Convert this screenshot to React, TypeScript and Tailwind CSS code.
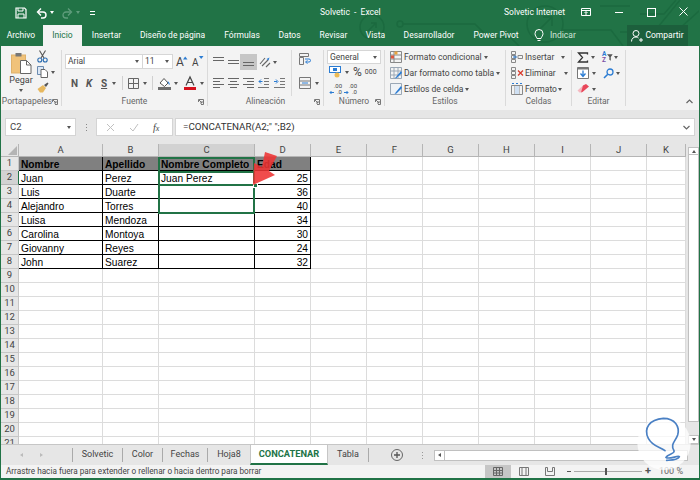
import React from 'react';

const UI = 'Roboto, "Noto Sans", sans-serif';

const Caret = ({ className = '' }: { className?: string }) => (
  <span className={`inline-block h-0 w-0 border-x-[2.5px] border-t-[3px] border-x-transparent border-t-[#555] ${className}`} />
);

const Svg = ({ w = 14, h = 14, children, className = '' }: { w?: number; h?: number; children: React.ReactNode; className?: string }) => (
  <svg width={w} height={h} viewBox={`0 0 ${w} ${h}`} fill="none" className={`shrink-0 overflow-visible ${className}`}>{children}</svg>
);

const Icons = {
  Save: () => <Svg w={12} h={12}><path d="M1 1h8.5L11 2.5V11H1z" stroke="#fff" strokeWidth="1.2" /><path d="M3 1v3h5V1M3 11V7h6v4" stroke="#fff" /></Svg>,
  Undo: () => <Svg w={11} h={11}><path d="M2 5h5a3 3 0 0 1 0 6H5" stroke="#fff" strokeWidth="1.4" /><path d="M5 1.5 1.5 5 5 8.5" stroke="#fff" strokeWidth="1.4" /></Svg>,
  Redo: () => <Svg w={11} h={11}><path d="M9 5H4a3 3 0 0 0 0 6h2" stroke="#5f9d7c" strokeWidth="1.3" /><path d="M6 1.5 9.5 5 6 8.5" stroke="#5f9d7c" strokeWidth="1.3" /></Svg>,
  Paste: () => (
    <Svg w={21} h={21}>
      <rect x="0.5" y="2" width="14" height="18" fill="#f0c27a" stroke="#dfb16a" />
      <rect x="4.500" y="0" width="6" height="3.500" fill="#777" />
      <path d="M9.500 7.500h6l4.500 4.500v8.500H9.500z" fill="#fff" stroke="#666" />
      <path d="M15.500 7.500V12H20" stroke="#666" />
    </Svg>
  ),
  Scissors: () => (
    <Svg w={11} h={13}>
      <path d="M2.5 0.5 7 8M8.5 0.5 4 8" stroke="#555" strokeWidth="1.1" />
      <circle cx="2.8" cy="10" r="2" stroke="#2b6cb0" strokeWidth="1.1" />
      <circle cx="8.2" cy="10" r="2" stroke="#2b6cb0" strokeWidth="1.1" />
    </Svg>
  ),
  Copy: () => (
    <Svg w={11} h={12}>
      <path d="M0.5 0.5h6v8h-6z" fill="#dbe7f5" stroke="#6b8bb0" />
      <path d="M4 3.5h4l2.5 2.5v5.5H4z" fill="#fff" stroke="#666" />
    </Svg>
  ),
  Brush: () => (
    <Svg w={12} h={11}>
      <path d="M0.5 7 6 3l3 3-3 4.5H3z" fill="#e7b85f" />
      <path d="M7 3 10.5 0.5l1 1L9 5z" fill="#555" />
    </Svg>
  ),
  GrowA: ({ down = false }: { down?: boolean }) => (
    <div className="relative flex h-[14px] w-[12px] items-end text-[#444]">
      <span className={down ? 'text-[10px] leading-[12px]' : 'text-[12px] leading-[13px]'}>A</span>
      <svg width="5" height="4" viewBox="0 0 5 4" className="absolute right-0 top-[1px]">
        <path d={down ? 'M0 0h4.500L2.200 3z' : 'M0 3.500h4.500L2.200 0.500z'} fill="#2b7cd3" />
      </svg>
    </div>
  ),
  Borders: () => <Svg w={11} h={11}><path d="M0.5 0.5h10v10h-10zM5.5 0.5v10M0.5 5.5h10" stroke="#666" /></Svg>,
  Fill: () => (
    <Svg w={13} h={14}>
      <path d="M2 7 6 2.5 10 7l-3.5 3.5z" stroke="#555" fill="#fff" />
      <path d="M9.5 5c2 1 2.500 3 2 4-.8-.5-1.500-2-2-4z" fill="#2b7cd3" />
      <rect x="0" y="11" width="13" height="3" fill="#6d6d6d" />
    </Svg>
  ),
  FontColor: () => (
    <Svg w={12} h={14}>
      <path d="M2 9.500 6 1l4 8.500M3.500 6.500h5" stroke="#444" strokeWidth="1.2" />
      <rect x="0" y="11" width="12" height="3" fill="#d5121e" />
    </Svg>
  ),
  Lines: ({ d }: { d: string }) => <Svg w={11} h={10}><path d={d} stroke="#666" /></Svg>,
  Orient: () => <Svg w={12} h={12}><path d="M1 8 6 2M3 10l6-6M7 11l4-4" stroke="#666" strokeWidth="1.1" /><path d="m7.500 3 3 -1.500-1 3z" fill="#2b7cd3" /></Svg>,
  Indent: ({ flip = false }: { flip?: boolean }) => (
    <Svg w={11} h={10}>
      <path d="M6 0.500h5M6 3.500h5M6 6.500h5M0 9.500h11" stroke="#777" />
      <path d={flip ? 'M0 3.500h3M2 1.500l2 2-2 2' : 'M1 3.500h3.500M3 1.500l-2 2 2 2'} stroke="#2b7cd3" />
    </Svg>
  ),
  Wrap: () => <Svg w={12} h={12}><path d="M0.500 0.500h9v3h-9zM0.500 4.500h4v7h-4z" stroke="#777" /><path d="M6 6h4a1.500 1.500 0 0 1 0 3H7.500" stroke="#2b7cd3" /><path d="m8.500 7.500-2 1.500 2 1.500" stroke="#2b7cd3" /></Svg>,
  Merge: () => <Svg w={12} h={12}><path d="M0.500 0.500h11v11h-11zM0.500 4h11M0.500 8h11" stroke="#777" /><path d="M3 6h6" stroke="#2b7cd3" /></Svg>,
  Currency: () => <Svg w={12} h={12}><rect x="0.500" y="0.500" width="11" height="6" fill="#fff" stroke="#2b7cd3" /><rect x="4" y="2" width="4" height="3" fill="#2b7cd3" /><circle cx="8" cy="9" r="2.500" fill="#eebb55" /></Svg>,
  Decimal: ({ flip = false }: { flip?: boolean }) => (
    <div className="relative flex h-[12px] w-[13px] flex-col items-end text-[6px] leading-[6px] text-[#444]">
      <span>.00</span>
      <span>.0</span>
      <svg width="5" height="5" viewBox="0 0 5 5" fill="none" className="absolute bottom-0 left-0">
        <path d={flip ? 'M0 2.500h4M2.500 1 4 2.500 2.500 4' : 'M1 2.500h4M2.500 1 1 2.500 2.500 4'} stroke="#2b7cd3" />
      </svg>
    </div>
  ),
  Cond: () => <Svg w={12} h={12}><path d="M0.500 0.500h11v11h-11zM4 0.500v11M0.500 4h11M0.500 8h11" stroke="#888" /><rect x="1" y="4.500" width="3" height="3" fill="#e0553d" /><rect x="4.500" y="0.500" width="3" height="3" fill="#e8a33d" /></Svg>,
  Table: () => <Svg w={12} h={12}><path d="M0.500 0.500h11v11h-11zM4 0.500v11M8 0.500v11M0.500 4h11M0.500 8h11" stroke="#9aa7b5" /><path d="M11 4 6 10l-1.500 1.500 2-.5L12 6z" fill="#2b7cd3" /></Svg>,
  CellStyle: () => <Svg w={12} h={12}><path d="M0.500 0.500h11v11h-11z" stroke="#9aa7b5" fill="#eef2f6" /><path d="M11 3 6 9l-1.500 2 2-.5L12 5z" fill="#2b7cd3" /></Svg>,
  Insert: () => <Svg w={12} h={12}><path d="M0.500 0.500h4v3h-4zM0.500 4.500h4v3h-4zM0.500 8.500h4v3h-4zM7 4.500h4.500v3H7z" stroke="#888" /><path d="M6 6H3M4 4.500 2.500 6 4 7.500" stroke="#2b7cd3" /></Svg>,
  Remove: () => <Svg w={13} h={12}><path d="M0.500 0.500h4v3h-4zM0.500 4.500h4v3h-4zM0.500 8.500h4v3h-4z" stroke="#888" /><path d="m7 3.500 5 5M12 3.500l-5 5" stroke="#d83b2d" strokeWidth="1.300" /></Svg>,
  Format: () => <Svg w={12} h={12}><path d="M0.500 2.500h11v9h-11zM4 2.500v9M8 2.500v9" stroke="#888" /><rect x="4" y="3" width="4" height="8" fill="#cfe0f3" /><path d="M1 0.500h2M5 0.500h2M9 0.500h2" stroke="#2b7cd3" /></Svg>,
  Sigma: () => <Svg w={11} h={11}><path d="M10.500 2.500V1h-9l4 4.500-4 4.500h9V8.500" stroke="#333" strokeWidth="1.300" /></Svg>,
  Sort: () => (
    <div className="flex h-[13px] w-[12px] items-center">
      <div className="flex flex-col text-[6.500px] font-bold leading-[6.500px]">
        <span className="text-[#2b7cd3]">A</span>
        <span className="text-[#7b4fa3]">Z</span>
      </div>
      <svg width="7" height="8" viewBox="0 0 7 8" className="ml-px"><path d="M0 1h6L4 4v4L2.500 7V4z" fill="#555" /></svg>
    </div>
  ),
  FillDown: () => <Svg w={12} h={12}><path d="M0.500 0.500h11v11h-11z" stroke="#777" fill="#fff" /><path d="M0.500 0.500h11v2h-11z" fill="#777" /><path d="M6 3.500V9M3.500 6.500 6 9.500l2.500-3" stroke="#2b7cd3" strokeWidth="1.300" /></Svg>,
  Search: () => <Svg w={11} h={11}><circle cx="7" cy="4" r="3" stroke="#2b7cd3" strokeWidth="1.300" /><path d="M4.800 6.200 1 10" stroke="#2b7cd3" strokeWidth="1.600" /></Svg>,
  Eraser: () => <Svg w={12} h={10}><path d="M0.500 6.500 6 1.500h2L4 8.500H2.500z" fill="#f5b8c0" /><path d="M6 1.500 9 0l3 2.500-6.500 5.500L4 8.500z" fill="#e8475a" /></Svg>,
};

const Group = ({ w, label, launcher, labelClass = '', children }: { w: string; label: string; launcher?: boolean; labelClass?: string; children: React.ReactNode }) => (
  <div className={`relative flex h-[56px] shrink-0 flex-col border-r border-[#dadada] ${w}`}>
    <div className="min-h-0 flex-1">{children}</div>
    <div className={`relative flex h-[10px] items-center justify-center text-[8.500px] text-[#666] ${labelClass}`}>
      {label}
      {launcher && (
        <svg width="6" height="6" viewBox="0 0 6 6" fill="none" className="absolute right-[3px] top-[3px]">
          <path d="M0.500 3V0.500H5.500V5.500H3M1 1l3 3M4 2v2H2" stroke="#777" />
        </svg>
      )}
    </div>
  </div>
);

const Box = ({ className, text }: { className: string; text: string }) => (
  <div className={`flex items-center justify-between border border-[#d6d6d6] bg-white pl-[2px] pr-[3px] text-[8.500px] text-[#444] ${className}`}>
    <span>{text}</span>
    <Caret />
  </div>
);

const lineSets = {
  top: 'M0 0.500h11M0 3.500h11',
  mid: 'M0 3.500h11M0 6.500h11',
  bot: 'M0 5.500h11M0 8.500h11',
  left: 'M0 0.500h11M0 3.500h7M0 6.500h11M0 9.500h7',
  center: 'M0 0.500h11M2 3.500h7M0 6.500h11M2 9.500h7',
  right: 'M0 0.500h11M4 3.500h7M0 6.500h11M4 9.500h7',
};

const tabs = [
  ['Archivo', 'ml-[6px] w-[30px]'],
  ['Inicio', 'ml-[7px] w-[39px] bg-[#f3f3f3] !text-[#217346]'],
  ['Insertar', 'ml-[11px] w-[27px]'],
  ['Diseño de página', 'ml-[21px] w-[63px]'],
  ['Fórmulas', 'ml-[21px] w-[34px]'],
  ['Datos', 'ml-[20px] w-[21px]'],
  ['Revisar', 'ml-[20px] w-[27px]'],
  ['Vista', 'ml-[20px] w-[17px]'],
  ['Desarrollador', 'ml-[21px] w-[48px]'],
  ['Power Pivot', 'ml-[21px] w-[44px]'],
];

const rowsData: Record<number, string[]> = {
  1: ['Nombre', 'Apellido', 'Nombre Completo', 'Edad'],
  2: ['Juan', 'Perez', 'Juan Perez', '25'],
  3: ['Luis', 'Duarte', '', '36'],
  4: ['Alejandro', 'Torres', '', '40'],
  5: ['Luisa', 'Mendoza', '', '34'],
  6: ['Carolina', 'Montoya', '', '30'],
  7: ['Giovanny', 'Reyes', '', '24'],
  8: ['John', 'Suarez', '', '32'],
};
const colNames = ['A', 'B', 'C', 'D', 'E', 'F', 'G', 'H', 'I', 'J', 'K'];
const sheetGrid = 'grid grid-cols-[18px_84px_56px_96px_56px_56px_56px_56px_56px_56px_56px_39px]';

const Sheet = () => (
  <div className="relative min-w-0 flex-1 overflow-hidden bg-white">
    <div className={sheetGrid} style={{ fontFamily: '"Liberation Sans", Arial, sans-serif' }}>
      {/* column headers */}
      <div className="relative h-[13px] border-r border-b border-[#b5b5b5] bg-[#e6e6e6]">
        <span className="absolute bottom-[1px] right-[1px] h-0 w-0 border-b-[9px] border-l-[9px] border-b-[#b4b4b4] border-l-transparent" />
      </div>
      {colNames.map((c) => (
        <div
          key={c}
          className={`flex h-[13px] items-center justify-center border-r border-b border-[#b5b5b5] text-[9.500px] text-[#444] ${c === 'C' ? 'bg-[#d2d2d2]' : 'bg-[#e6e6e6]'}`}
          style={{ fontFamily: UI }}
        >
          {c}
        </div>
      ))}
      {Array.from({ length: 21 }, (_, i) => i + 1).map((r) => (
        <React.Fragment key={r}>
          <div
            className={`flex h-[14px] items-center justify-center border-r border-b text-[9.500px] text-[#444] ${r === 2 ? 'border-r-[#217346] bg-[#d2d2d2] border-b-[#b5b5b5]' : 'border-[#c6c6c6] bg-[#e6e6e6]'}`}
            style={{ fontFamily: UI }}
          >
            {r}
          </div>
          {colNames.map((c, ci) => {
            const val = rowsData[r]?.[ci] ?? '';
            const inTable = r <= 8 && ci < 4;
            return (
              <div
                key={c}
                className={`flex h-[14px] items-center overflow-visible whitespace-nowrap border-r border-b pt-[2px] text-[10.200px] text-black ${inTable ? 'border-black' : 'border-[#dcdcdc]'} ${r === 1 && inTable ? 'bg-[#808080] font-bold' : ''} ${ci === 3 && r > 1 ? 'justify-end pr-[2px]' : 'pl-[2px]'}`}
              >
                {val}
              </div>
            );
          })}
        </React.Fragment>
      ))}
    </div>
    {/* selection */}
    <div className="absolute left-[157px] top-[13px] h-[57px] w-[97px] border-2 border-[#217346]" />
    <div className="absolute left-[157px] top-[27px] h-[15px] w-[97px] border-2 border-[#217346]" />
    <div className="absolute left-[252px] top-[39px] h-[5px] w-[5px] border border-white bg-[#217346]" />
  </div>
);

const App: React.FC = () => {
  return (
    <div className="relative flex h-[480px] w-[700px] flex-col overflow-hidden border-x border-b-2 border-[#217346] bg-[#e6e6e6]" style={{ fontFamily: UI }}>
      {/* Title + tabs */}
      <div className="relative -mx-px h-[46px] shrink-0 bg-[#217346] text-white">
        <svg width="700" height="46" viewBox="0 0 700 46" fill="none" className="absolute inset-0">
          <g stroke="#1b6a3f" strokeWidth="1.500">
            <circle cx="372" cy="27" r="12" />
            <path d="M368 31l8-8M371 23h5v5" />
            <circle cx="400" cy="24" r="3" />
            <path d="M403 24h72l14 14h22l8 8" />
            <circle cx="545" cy="24" r="18" />
            <path d="M538 31l14-14M543 17h9v9" />
            <path d="M563 30h48l12 16M620 32h34l26-32M660 46 700 10M640 14h24l12-14M600 6h30" />
          </g>
        </svg>
        <div className="relative flex h-[25px] items-center text-[8.500px]">
          <div className="ml-[15px] flex items-center">
            <Icons.Save />
            <span className="ml-[9px]"><Icons.Undo /></span>
            <Caret className="ml-[3px] !border-t-white" />
            <span className="ml-[8px]"><Icons.Redo /></span>
            <Caret className="ml-[3px] !border-t-[#5f9d7c]" />
            <span className="ml-[10px] h-[4px] w-[5px] border-t border-b border-white" />
          </div>
          <span className="absolute left-[320px]">Solvetic&nbsp; -&nbsp; Excel</span>
          <span className="absolute left-[504px] whitespace-nowrap">Solvetic Internet</span>
          <svg width="10" height="8" viewBox="0 0 10 8" fill="none" className="absolute left-[581px] top-[8px]">
            <path d="M0.500 0.500h9v7h-9zM0.500 2.500h9M5 7V4M3.500 5 5 3.500 6.500 5" stroke="#fff" />
          </svg>
          <span className="absolute left-[615px] top-[12px] h-px w-[8px] bg-white" />
          <span className="absolute left-[647px] top-[8px] h-[9px] w-[9px] border border-white" />
          <svg width="9" height="9" viewBox="0 0 9 9" fill="none" className="absolute left-[679px] top-[7px]">
            <path d="m0.500 0.500 8 8M8.500 0.500l-8 8" stroke="#fff" />
          </svg>
        </div>
        <div className="relative flex h-[21px] items-stretch text-[8.500px]">
          {tabs.map(([t, c]) => (
            <div key={t} className={`flex items-center justify-center whitespace-nowrap ${c}`}>{t}</div>
          ))}
          <div className="ml-[16px] flex items-center text-[#cfe3d8]">
            <svg width="10" height="13" viewBox="0 0 10 13" fill="none" className="mr-[6px]">
              <path d="M3 9.500C2.500 7.500 1 7 1 4.500a4 4 0 0 1 8 0C9 7 7.500 7.500 7 9.500zM3.500 11.500h3" stroke="#fff" />
            </svg>
            <span className="w-[25px] whitespace-nowrap">Indicar</span>
          </div>
          <div className="ml-[52px] flex w-[61px] items-center justify-center bg-[#1c5f3c]">
            <svg width="12" height="12" viewBox="0 0 12 12" fill="none" className="mr-[2px]">
              <circle cx="5" cy="3.500" r="3" stroke="#fff" />
              <path d="M0.500 11.500c0-3 2-4.500 4.500-4.500 1 0 2 .3 2.500 1M8 10h4M10 8v4" stroke="#fff" />
            </svg>
            <span>Compartir</span>
          </div>
        </div>
      </div>

      {/* Ribbon */}
      <div className="-ml-px flex h-[64px] shrink-0 bg-[#f3f3f3] pl-px pt-[4px] text-[#444]">
        <Group w="w-[61px]" label="Portapapeles" launcher labelClass="pr-[8px]">
          <div className="flex">
            <div className="ml-[9px] flex w-[22px] flex-col items-center pt-[3px]">
              <Icons.Paste />
              <span className="text-[9px] leading-[12px]">Pegar</span>
              <Caret className="mt-[3px]" />
            </div>
            <div className="ml-[5px] flex flex-col">
              <Icons.Scissors />
              <div className="mt-[3px] flex items-center"><Icons.Copy /><Caret className="ml-[3px]" /></div>
              <span className="mt-[4px]"><Icons.Brush /></span>
            </div>
          </div>
        </Group>
        <Group w="w-[146px]" label="Fuente" launcher>
          <div className="pl-[3px] pt-[4px]">
            <div className="flex items-center">
              <Box className="h-[15px] w-[78px]" text="Arial" />
              <Box className="h-[15px] w-[30px] border-l-0" text="11" />
              <span className="ml-[3px]"><Icons.GrowA /></span>
              <span className="ml-[4px]"><Icons.GrowA down /></span>
            </div>
            <div className="mt-[5px] flex h-[18px] items-center text-[10px] font-bold text-[#555]">
              <span className="ml-[6px] w-[15px]">N</span>
              <span className="w-[15px] italic">K</span>
              <span className="w-[11px] underline">S</span>
              <Caret />
              <span className="ml-[6px] h-[14px] w-px bg-[#d0d0d0]" />
              <span className="ml-[5px]"><Icons.Borders /></span>
              <Caret className="ml-[4px]" />
              <span className="ml-[5px] h-[14px] w-px bg-[#d0d0d0]" />
              <span className="ml-[5px]"><Icons.Fill /></span>
              <Caret className="ml-[3px]" />
              <span className="ml-[6px]"><Icons.FontColor /></span>
              <Caret className="ml-[4px]" />
            </div>
          </div>
        </Group>
        <Group w="w-[116px]" label="Alineación" launcher>
          <div className="flex">
            <div className="h-[46px] w-[84px] border-r border-[#dadada] pl-[5px] pt-[4px]">
              <div className="flex h-[16px] items-center">
                <Icons.Lines d={lineSets.top} />
                <span className="ml-[4px]"><Icons.Lines d={lineSets.mid} /></span>
                <span className="ml-[1px] flex h-[16px] w-[17px] items-center justify-center bg-[#c6c6c6]"><Icons.Lines d={lineSets.bot} /></span>
                <span className="ml-[2px]"><Icons.Orient /></span>
                <Caret className="ml-[2px]" />
              </div>
              <div className="mt-[7px] flex h-[12px] items-center gap-[4px]">
                <Icons.Lines d={lineSets.left} />
                <Icons.Lines d={lineSets.center} />
                <Icons.Lines d={lineSets.right} />
                <Icons.Indent />
                <span className="ml-[1px]"><Icons.Indent flip /></span>
              </div>
            </div>
            <div className="ml-[7px] flex flex-col gap-[12px] pt-[3px]">
              <Icons.Wrap />
              <div className="flex items-center"><Icons.Merge /><Caret className="ml-[4px]" /></div>
            </div>
          </div>
        </Group>
        <Group w="w-[61px]" label="Número" launcher>
          <div className="pl-[3px]">
            <Box className="h-[14px] w-[54px]" text="General" />
            <div className="mt-px flex items-center">
              <span className="ml-[2px]"><Icons.Currency /></span>
              <Caret className="ml-[4px]" />
              <span className="ml-[4px] text-[12px] leading-[14px]">%</span>
              <span className="ml-[3px] text-[7px] leading-[14px]">000</span>
            </div>
            <div className="mt-[4px] flex gap-[2px] pl-[2px]">
              <Icons.Decimal />
              <Icons.Decimal flip />
            </div>
          </div>
        </Group>
        <Group w="w-[121px]" label="Estilos">
          <div className="flex flex-col gap-[4px] pl-[5px] pt-px text-[8.500px] leading-[12px]">
            {[
              ['Formato condicional', <Icons.Cond key="c" />],
              ['Dar formato como tabla', <Icons.Table key="t" />],
              ['Estilos de celda', <Icons.CellStyle key="s" />],
            ].map(([t, ic]) => (
              <div key={t as string} className="flex items-center whitespace-nowrap">
                {ic}
                <span className="ml-[2px]">{t}</span>
                <Caret className="ml-[2px]" />
              </div>
            ))}
          </div>
        </Group>
        <Group w="w-[66px]" label="Celdas">
          <div className="flex flex-col gap-[4px] pl-[5px] pt-px text-[8.500px] leading-[12px]">
            <div className="flex items-center"><Icons.Insert /><span className="ml-[2px] w-[36px]">Insertar</span><Caret /></div>
            <div className="flex items-center"><Icons.Remove /><span className="ml-px w-[39px]">Eliminar</span><Caret /></div>
            <div className="flex items-center"><Icons.Format /><span className="ml-[2px] w-[33px]">Formato</span><Caret /></div>
          </div>
        </Group>
        <Group w="w-[54px]" label="Editar">
          <div className="flex flex-col gap-[4px] pl-[5px] pt-px">
            <div className="flex h-[12px] items-center"><Icons.Sigma /><Caret className="ml-[3px]" /><span className="ml-[7px]"><Icons.Sort /></span><Caret /></div>
            <div className="flex h-[12px] items-center"><Icons.FillDown /><Caret className="ml-[3px]" /><span className="ml-[7px]"><Icons.Search /></span><Caret className="ml-[2px]" /></div>
            <div className="flex h-[12px] items-center"><Icons.Eraser /><Caret className="ml-[3px]" /></div>
          </div>
        </Group>
        <div className="flex h-[56px] flex-1 items-end justify-end pb-[2px] pr-[6px]">
          <svg width="7" height="5" viewBox="0 0 7 5" fill="none"><path d="m0.500 4 3-3 3 3" stroke="#666" strokeWidth="1.200" /></svg>
        </div>
      </div>

      {/* Formula bar */}
      <div className="flex h-[34px] shrink-0 items-start pt-[8px]">
        <div className="ml-[4px] flex h-[18px] w-[71px] items-center justify-between border border-[#d4d4d4] bg-white px-[4px] text-[9.500px] text-[#444]">
          <span>C2</span>
          <Caret />
        </div>
        <div className="ml-[7px] flex h-[18px] w-[6px] flex-col items-center justify-center gap-[2px]">
          <span className="h-px w-px bg-[#888]" /><span className="h-px w-px bg-[#888]" /><span className="h-px w-px bg-[#888]" />
        </div>
        <div className="ml-[7px] flex h-[18px] w-[77px] items-center border border-[#d4d4d4] bg-white">
          <svg width="9" height="9" viewBox="0 0 9 9" fill="none" className="ml-[9px]"><path d="m1 1 7 7M8 1 1 8" stroke="#c0c0c0" /></svg>
          <svg width="10" height="9" viewBox="0 0 10 9" fill="none" className="ml-[14px]"><path d="m1 5 3 3 5-7" stroke="#c0c0c0" /></svg>
          <span className="ml-[14px] text-[10px] italic text-[#444]" style={{ fontFamily: '"Liberation Serif", serif' }}>f<span className="text-[8px]">x</span></span>
        </div>
        <div className="ml-[2px] flex h-[18px] w-[520px] items-center justify-between border border-[#d4d4d4] bg-white pl-[7px] pr-[4px] text-[9.800px] text-[#333]">
          <span>=CONCATENAR(A2;" ";B2)</span>
          <svg width="7" height="5" viewBox="0 0 7 5" fill="none"><path d="m0.500 1 3 3 3-3" stroke="#666" strokeWidth="1.200" /></svg>
        </div>
      </div>

      {/* Sheet + vertical scrollbar */}
      <div className="flex min-h-0 flex-1">
        <Sheet />
        <div className="flex w-[13px] shrink-0 flex-col bg-[#e6e6e6] pl-[2px] pt-[3px]">
          <div className="flex h-[8px] items-center justify-center border border-[#c0c0c0] bg-white">
            <span className="h-0 w-0 border-x-[2.500px] border-b-[3px] border-x-transparent border-b-[#555]" />
          </div>
          <div className="h-[267px] border-x border-b border-[#c0c0c0] bg-white" />
          <div className="flex-1" />
          <div className="flex h-[9px] items-center justify-center border border-[#c0c0c0] bg-white">
            <Caret />
          </div>
        </div>
      </div>

      {/* Sheet tabs */}
      <div className="flex h-[21px] shrink-0 items-center border-t border-[#c6c6c6] bg-[#e6e6e6] text-[9px] text-[#444]">
        <span className="ml-[19px] h-0 w-0 border-y-[2.500px] border-r-[3px] border-y-transparent border-r-[#bbb]" />
        <span className="ml-[17px] h-0 w-0 border-y-[2.500px] border-l-[3px] border-y-transparent border-l-[#bbb]" />
        <span className="ml-[29px] h-[14px] w-px bg-[#aaa]" />
        <span className="w-[49px] text-center">Solvetic</span>
        <span className="h-[14px] w-px bg-[#aaa]" />
        <span className="w-[39px] text-center">Color</span>
        <span className="h-[14px] w-px bg-[#aaa]" />
        <span className="w-[44px] text-center">Fechas</span>
        <span className="h-[14px] w-px bg-[#aaa]" />
        <span className="w-[42px] text-center">Hoja8</span>
        <div className="flex h-[20px] w-[78px] items-center justify-center self-start border-x border-b-2 border-x-[#c6c6c6] border-b-[#217346] bg-white text-[9.300px] font-bold text-[#217346]">CONCATENAR</div>
        <span className="w-[40px] text-center">Tabla</span>
        <span className="h-[14px] w-px bg-[#aaa]" />
        <svg width="12" height="12" viewBox="0 0 12 12" fill="none" className="ml-[22px]">
          <circle cx="6" cy="6" r="5.500" stroke="#666" />
          <path d="M6 3v6M3 6h6" stroke="#555" strokeWidth="1.300" />
        </svg>
        <div className="ml-[19px] flex flex-col gap-[2px]">
          <span className="h-px w-px bg-[#999]" /><span className="h-px w-px bg-[#999]" /><span className="h-px w-px bg-[#999]" />
        </div>
        <div className="ml-[11px] flex h-[11px] w-[254px] items-center border border-[#c0c0c0] bg-white">
          <span className="ml-[3px] h-0 w-0 border-y-[2.500px] border-r-[3px] border-y-transparent border-r-[#555]" />
          <span className="ml-[3px] h-full w-px bg-[#c0c0c0]" />
        </div>
      </div>

      {/* Status bar */}
      <div className="flex h-[13px] shrink-0 items-center bg-[#f3f3f3] text-[8.200px] text-[#444]">
        <span className="ml-[5px] w-[479px] whitespace-nowrap">Arrastre hacia fuera para extender o rellenar o hacia dentro para borrar</span>
        <div className="flex h-full w-[26px] items-center justify-center bg-[#c6c6c6]">
          <svg width="10" height="9" viewBox="0 0 10 9" fill="none"><path d="M0.500 0.500h9v8h-9zM3.500 0.500v8M6.500 0.500v8M0.500 3.500h9M0.500 6h9" stroke="#666" /></svg>
        </div>
        <svg width="10" height="9" viewBox="0 0 10 9" fill="none" className="ml-[8px]"><path d="M0.500 0.500h9v8h-9zM3 0.500v8M7 0.500v8" stroke="#777" /></svg>
        <svg width="10" height="9" viewBox="0 0 10 9" fill="none" className="ml-[16px]"><path d="M0.500 0.500h2v4h5v-4h2v8h-9z" stroke="#777" /></svg>
        <span className="ml-[12px] h-px w-[4px] bg-[#555]" />
        <span className="relative ml-[3px] h-px w-[68px] bg-[#aaa]">
          <span className="absolute left-[31px] top-[-3px] h-[7px] w-[2px] bg-[#555]" />
        </span>
        <span className="ml-[3px] text-[11px] font-bold text-[#555]">+</span>
        <span className="ml-[8px] text-[9px] text-[#666]">100 %</span>
      </div>

      {/* Red arrow annotation */}
      <svg width="30" height="40" viewBox="0 0 30 40" className="absolute left-[249px] top-[149px]">
        <polygon points="3,36 4,14 12,18 15,3 27,7 19,22 25,26" fill="#ee3333" opacity="0.88" />
      </svg>

      {/* Solvetic watermark logo */}
      <svg width="90" height="100" viewBox="0 0 270 300" fill="none" className="absolute left-[609px] top-[380px]">
        <circle cx="162" cy="190" r="80" fill="#fff" fillOpacity="0.75" />
        <path d="M165 212C150 200 128 200 115 175C100 145 118 118 160 115C195 115 210 140 203 165C196 185 180 192 192 212C196 222 172 222 168 232C175 240 205 225 208 230C205 240 185 240 170 241" stroke="#4a80c4" strokeWidth="5" strokeLinecap="round" />
      </svg>
    </div>
  );
};

export default App;
